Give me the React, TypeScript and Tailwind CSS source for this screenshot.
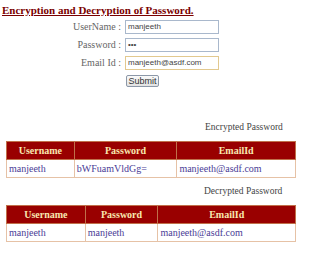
import React from "react";

const serif = { fontFamily: '"Liberation Serif", "Times New Roman", serif' };
const sans = { fontFamily: '"Liberation Sans", Arial, sans-serif' };

function DataTable({ widths, rows }: { widths: number[]; rows: string[] }) {
  const heads = ["Username", "Password", "EmailId"];
  return (
    <table className="border-collapse ml-[6px] w-[290px] border border-[#e6c2a6]" style={serif}>
      <thead>
        <tr className="bg-[#990000] h-[18px]">
          {heads.map((h, i) => (
            <th
              key={h}
              style={{ width: widths[i] }}
              className="border border-[#c0704a] text-[10px] font-bold text-[#f8e8b0] text-center p-0 leading-[17px]"
            >
              {h}
            </th>
          ))}
        </tr>
      </thead>
      <tbody>
        <tr className="h-[18px]">
          {rows.map((r, i) => (
            <td
              key={i}
              className="border border-[#e6c2a6] text-[10px] text-[#4a3c96] pl-[2px] p-0 leading-[17px]"
            >
              {r}
            </td>
          ))}
        </tr>
      </tbody>
    </table>
  );
}

export default function App() {
  const fields: [string, string, string][] = [
    ["UserName :", "manjeeth", "border-[#a9b8cc]"],
    ["Password :", "•••", "border-[#a9b8cc]"],
    ["Email Id :", "manjeeth@asdf.com", "border-[#e2c98f]"],
  ];
  return (
    <div className="w-[320px] h-[263px] bg-white overflow-hidden">
      <div
        className="pl-[2px] pt-[4px] text-[11px] font-bold text-[#7a0000] underline leading-[13px]"
        style={serif}
      >
        Encryption and Decryption of Password.
      </div>
      <div className="flex flex-col gap-[5px] mt-[3px]">
        {fields.map(([l, v, b]) => (
          <div key={l} className="flex items-center h-[13px]">
            <div className="w-[122px] text-right text-[10px] text-[#666] pr-[1px]" style={serif}>
              {l}
            </div>
            <div
              className={`ml-[3px] w-[94px] h-[14px] border ${b} bg-white text-[8px] text-[#444] pl-[2px] leading-[12px]`}
              style={sans}
            >
              {v}
            </div>
          </div>
        ))}
      </div>
      <div className="ml-[126px] mt-[6px]">
        <div
          className="w-[33px] h-[12px] border border-[#8c98a8] rounded-[2px] bg-gradient-to-b from-[#fafafa] to-[#e2e2e2] text-[9px] text-[#333] text-center leading-[10px]"
          style={sans}
        >
          Submit
        </div>
      </div>
      <div className="mt-[34px] pl-[205px] text-[9.5px] text-[#444] leading-[13px]" style={serif}>
        Encrypted Password
      </div>
      <div className="mt-[7px]">
        <DataTable widths={[68, 103, 119]} rows={["manjeeth", "bWFuamVldGg=", "manjeeth@asdf.com"]} />
      </div>
      <div className="mt-[7px] pl-[204px] text-[9.5px] text-[#444] leading-[13px]" style={serif}>
        Decrypted Password
      </div>
      <div className="mt-[7px]">
        <DataTable widths={[79, 73, 138]} rows={["manjeeth", "manjeeth", "manjeeth@asdf.com"]} />
      </div>
    </div>
  );
}
